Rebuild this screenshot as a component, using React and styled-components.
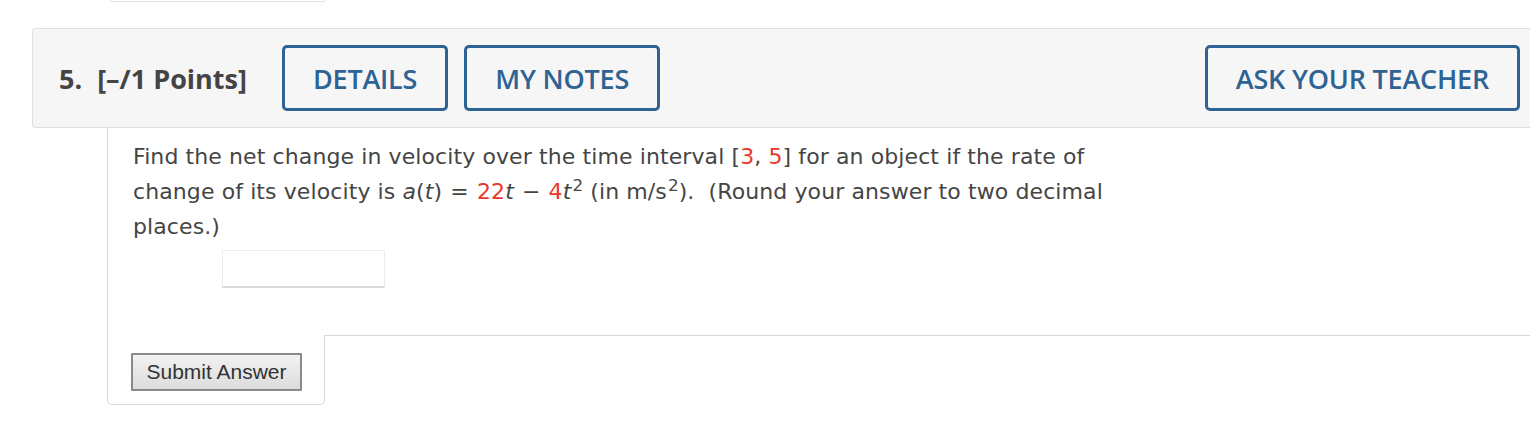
import React from "react";
import styled, { createGlobalStyle } from "styled-components";

const Global = createGlobalStyle`
  html, body { margin: 0; padding: 0; background: #fff; overflow: hidden; }
  body { font-family: "DejaVu Sans", Verdana, sans-serif; }
`;

const Page = styled.div`
  width: 1530px;
  height: 426px;
  padding-left: 32px;
  box-sizing: border-box;
  overflow: hidden;
`;

const PrevTail = styled.div`
  margin-left: 78px;
  width: 213px;
  height: 1px;
  border: 1px solid #e2e2e2;
  border-top: none;
  border-radius: 0 0 4px 4px;
`;

const Header = styled.div`
  margin-top: 26px;
  height: 100px;
  width: 1498px;
  box-sizing: border-box;
  display: flex;
  align-items: center;
  background: #f6f6f6;
  border: 1px solid #dfdfdf;
  border-right: none;
  border-radius: 4px 0 0 4px;
  padding-left: 26px;
  font-family: "Open Sans", sans-serif;
`;

const Number = styled.span`
  font-weight: 700;
  font-size: 27px;
  color: #444;
  margin-right: 15px;
`;

const Points = styled.span`
  font-weight: 700;
  font-size: 27px;
  color: #444;
  margin-right: 35px;
`;

const HeadButton = styled.button`
  height: 66px;
  box-sizing: border-box;
  padding: 0 ${(p) => p.$pad || 28}px;
  margin-right: ${(p) => p.$gap || 16}px;
  margin-left: ${(p) => (p.$push ? "auto" : "0")};
  border: 3px solid #2e6393;
  border-radius: 5px;
  background: transparent;
  color: #2e6393;
  font-family: "Open Sans", sans-serif;
  font-weight: 600;
  font-size: 27px;
  letter-spacing: -0.2px;
  white-space: nowrap;
  cursor: pointer;
`;

const Question = styled.div`
  margin-left: 75px;
`;

const Body = styled.div`
  height: 207px;
  box-sizing: border-box;
  border-left: 1px solid #d8d8d8;
  padding: 11px 0 0 25px;
`;

const Prompt = styled.p`
  margin: 0;
  width: 990px;
  font-family: "DejaVu Sans", Verdana, sans-serif;
  font-size: 22px;
  line-height: 35px;
  letter-spacing: 0.1px;
  color: #454545;
`;

const Red = styled.span`
  color: #e8372c;
`;

const Var = styled.i`
  font-style: italic;
`;

const Op = styled.span`
  margin: 0 1px;
`;

const Sup = styled.sup`
  font-size: 0.76em;
  line-height: 0;
  vertical-align: 0.5em;
  margin-left: 1px;
`;

const Answer = styled.input`
  display: block;
  margin: 6px 0 0 89px;
  width: 163px;
  height: 38px;
  box-sizing: border-box;
  border: 1px solid #ededed;
  border-bottom: 2px solid #d9d9d9;
  background: #fff;
  outline: none;
`;

const Footer = styled.div`
  display: flex;
  align-items: flex-start;
`;

const SubmitCell = styled.div`
  width: 218px;
  height: 70px;
  box-sizing: border-box;
  border: 1px solid #d8d8d8;
  border-top: none;
  border-radius: 0 0 5px 5px;
  padding: 18px 0 0 23px;
`;

const Filler = styled.div`
  flex: 1;
  border-top: 1px solid #d8d8d8;
`;

const SubmitButton = styled.button`
  width: 171px;
  height: 38px;
  box-sizing: border-box;
  padding: 0;
  border: 2px solid #8a8a8a;
  border-radius: 1px;
  background: linear-gradient(#f2f2f2, #dcdcdc);
  color: #333;
  font-family: "Liberation Sans", Arial, sans-serif;
  font-size: 21px;
  cursor: pointer;
`;

export default function App() {
  return (
    <Page>
      <Global />
      <PrevTail />
      <Header>
        <Number>5.</Number>
        <Points>[–/1 Points]</Points>
        <HeadButton $pad={28}>DETAILS</HeadButton>
        <HeadButton $pad={28}>MY NOTES</HeadButton>
        <HeadButton $pad={28} $push $gap={10}>ASK YOUR TEACHER</HeadButton>
      </Header>
      <Question>
        <Body>
          <Prompt>
            Find the net change in velocity over the time interval [<Red>3</Red>, <Red>5</Red>] for an object if the rate of
            change of its velocity is <Var>a</Var>(<Var>t</Var>) <Op>=</Op> <Red>22</Red>
            <Var>t</Var> <Op>−</Op> <Red>4</Red>
            <Var>t</Var>
            <Sup>2</Sup> (in m/s<Sup>2</Sup>).&nbsp; (Round your answer to two decimal places.)
          </Prompt>
          <Answer type="text" aria-label="answer" />
        </Body>
        <Footer>
          <SubmitCell>
            <SubmitButton>Submit Answer</SubmitButton>
          </SubmitCell>
          <Filler />
        </Footer>
      </Question>
    </Page>
  );
}
